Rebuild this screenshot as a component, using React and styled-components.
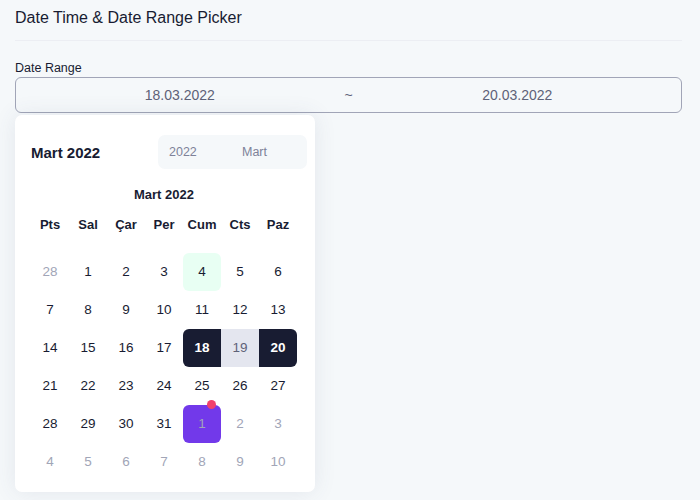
import React from "react";
import styled, { createGlobalStyle } from "styled-components";

const Global = createGlobalStyle`
  html, body {
    margin: 0;
    background: #f5f8fa;
    font-family: "Liberation Sans", Arial, sans-serif;
    color: #181c32;
  }
`;

const Page = styled.div`
  min-height: 500px;
  box-sizing: border-box;
  padding: 0 18px 0 15px;
`;

const Title = styled.h1`
  margin: 0;
  padding-top: 9px;
  height: 31px;
  font-size: 16px;
  font-weight: 400;
  color: #181c32;
  border-bottom: 1px solid #eceef3;
`;

const Label = styled.div`
  margin-top: 20px;
  font-size: 12.5px;
  color: #181c32;
  line-height: 14px;
`;

const Field = styled.div`
  position: relative;
  margin-top: 2px;
`;

const InputBox = styled.div`
  height: 34px;
  border: 1px solid #a1a5b7;
  border-radius: 6px;
  display: flex;
  align-items: center;
  font-size: 14px;
  color: #5e6278;
`;

const Side = styled.div`
  flex: 1;
  text-align: center;
`;

const Tilde = styled.div`
  width: 10px;
  text-align: center;
`;

const Popup = styled.div`
  position: absolute;
  z-index: 10;
  top: 38px;
  left: 0;
  width: 300px;
  height: 377px;
  box-sizing: border-box;
  background: #ffffff;
  border-radius: 7px;
  box-shadow: 0 0 22px rgba(70, 80, 120, 0.1);
  padding: 20px 8px 0 16px;
`;

const Header = styled.div`
  display: flex;
  align-items: center;
  justify-content: space-between;
`;

const HeaderTitle = styled.div`
  font-size: 15px;
  font-weight: 700;
`;

const Select = styled.div`
  width: 149px;
  height: 34px;
  background: #f5f8fa;
  border-radius: 7px;
  display: flex;
  align-items: center;
  font-size: 12.5px;
  color: #7e8299;
`;

const SelectPart = styled.span`
  width: ${(p) => p.$w}px;
  padding-left: ${(p) => p.$pl}px;
`;

const MonthTitle = styled.div`
  width: 266px;
  text-align: center;
  font-size: 13px;
  font-weight: 700;
  margin-top: 18px;
`;

const Grid = styled.div`
  width: 266px;
  display: grid;
  grid-template-columns: repeat(7, 38px);
`;

const WeekRow = styled(Grid)`
  margin-top: 12px;
  margin-bottom: 17px;
`;

const WeekDay = styled.div`
  height: 22px;
  line-height: 22px;
  text-align: center;
  font-size: 13px;
  font-weight: 700;
`;

const dayStyles = {
  normal: { bg: "transparent", fg: "#181c32", radius: "0" },
  muted: { bg: "transparent", fg: "#a1a5b7", radius: "0" },
  hover: { bg: "#e8fff3", fg: "#181c32", radius: "6px" },
  start: { bg: "#181c32", fg: "#ffffff", radius: "6px 0 0 6px" },
  mid: { bg: "#e4e6ef", fg: "#5e6278", radius: "0" },
  end: { bg: "#181c32", fg: "#ffffff", radius: "0 6px 6px 0" },
  today: { bg: "#7239ea", fg: "#a1a5b7", radius: "6px" },
};

const Day = styled.div`
  position: relative;
  height: 38px;
  line-height: 38px;
  text-align: center;
  font-size: 13.5px;
  color: ${(p) => dayStyles[p.$kind].fg};
  background: ${(p) => dayStyles[p.$kind].bg};
  border-radius: ${(p) => dayStyles[p.$kind].radius};
  font-weight: ${(p) => (p.$kind === "start" || p.$kind === "end" ? 700 : 400)};
`;

const Dot = styled.span`
  position: absolute;
  top: -5px;
  right: 5px;
  width: 9px;
  height: 9px;
  border-radius: 50%;
  background: #f1416c;
`;

const weekDays = ["Pts", "Sal", "Çar", "Per", "Cum", "Cts", "Paz"];

const days = [
  { d: 28, muted: true },
  ...Array.from({ length: 31 }, (_, i) => ({ d: i + 1 })),
  ...Array.from({ length: 10 }, (_, i) => ({ d: i + 1, muted: true })),
];

const kindFor = (day, idx) => {
  if (idx === 32) return "today";
  if (day.muted) return "muted";
  if (day.d === 4) return "hover";
  if (day.d === 18) return "start";
  if (day.d === 19) return "mid";
  if (day.d === 20) return "end";
  return "normal";
};

export default function App() {
  return (
    <Page>
      <Global />
      <Title>Date Time &amp; Date Range Picker</Title>
      <Label>Date Range</Label>
      <Field>
        <InputBox>
          <Side>18.03.2022</Side>
          <Tilde>~</Tilde>
          <Side>20.03.2022</Side>
        </InputBox>
        <Popup>
          <Header>
            <HeaderTitle>Mart 2022</HeaderTitle>
            <Select>
              <SelectPart $w={73} $pl={11}>2022</SelectPart>
              <SelectPart $w={60} $pl={0}>Mart</SelectPart>
            </Select>
          </Header>
          <MonthTitle>Mart 2022</MonthTitle>
          <WeekRow>
            {weekDays.map((w) => (
              <WeekDay key={w}>{w}</WeekDay>
            ))}
          </WeekRow>
          <Grid>
            {days.map((day, i) => {
              const kind = kindFor(day, i);
              return (
                <Day key={i} $kind={kind}>
                  {day.d}
                  {kind === "today" && <Dot />}
                </Day>
              );
            })}
          </Grid>
        </Popup>
      </Field>
    </Page>
  );
}
